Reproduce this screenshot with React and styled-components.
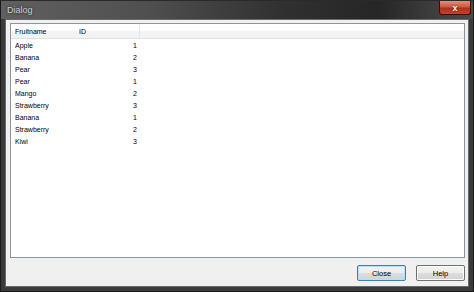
import React from 'react';
import styled, { createGlobalStyle } from 'styled-components';

const GlobalStyle = createGlobalStyle`
  html, body {
    margin: 0;
    padding: 0;
    background: #1e1e1e;
  }
  * {
    box-sizing: border-box;
  }
`;

const Window = styled.div`
  width: 474px;
  height: 292px;
  display: flex;
  flex-direction: column;
  background: #3a3a3a;
  border: 1px solid #1a1a1a;
  border-top-color: #2a2a2a;
  font-family: "Liberation Sans", Arial, sans-serif;
  overflow: hidden;
`;

const TitleBar = styled.div`
  height: 18px;
  display: flex;
  align-items: flex-start;
  justify-content: space-between;
  padding-left: 6px;
  background: linear-gradient(90deg, #606060 0%, #505050 30%, #303030 60%, #262626 80%, #3e3e3e 92%, #4a4a4a 100%);
`;

const Title = styled.span`
  font-size: 9px;
  line-height: 18px;
  color: #cfcfcf;
  text-shadow: 0 0 3px #1a1a1a;
`;

const CloseX = styled.div`
  width: 32px;
  height: 14px;
  margin-right: 2px;
  display: flex;
  align-items: center;
  justify-content: center;
  border: 1px solid #3a0d08;
  border-top: none;
  border-radius: 0 0 3px 3px;
  background: linear-gradient(180deg, #e0907f 0%, #c95a44 45%, #b12e17 55%, #c4452a 100%);
  color: #fff;
  font-size: 9px;
  font-weight: bold;
  text-shadow: 0 0 2px #5a1206;
`;

const Frame = styled.div`
  flex: 1;
  display: flex;
  padding: 0 4px 4px 4px;
`;

const Client = styled.div`
  flex: 1;
  display: flex;
  flex-direction: column;
  background: #f0f0f0;
  border: 1px solid #6a6a6a;
  padding: 3px 3px 0 4px;
`;

const List = styled.div`
  flex: 1;
  background: #fff;
  border: 1px solid #8e949c;
  display: flex;
  flex-direction: column;
`;

const Row = styled.div`
  display: grid;
  grid-template-columns: 62px 67px 1fr;
  height: ${p => (p.$header ? 15 : 12)}px;
  font-size: 7px;
  color: #000;
  align-items: center;
  ${p => p.$header && `
    background: linear-gradient(180deg, #ffffff 0%, #ffffff 45%, #f2f3f5 55%, #f2f3f5 100%);
    border-bottom: 1px solid #e0e2e5;
  `}
`;

const HeadCell = styled.div`
  height: 100%;
  display: flex;
  align-items: center;
  padding-left: ${p => p.$pad || 4}px;
  border-right: 1px solid ${p => p.$line || 'transparent'};
`;

const Cell = styled.div`
  padding: 0 ${p => (p.$num ? 3 : 0)}px 0 ${p => (p.$num ? 0 : 4)}px;
  text-align: ${p => (p.$num ? 'right' : 'left')};
`;

const Footer = styled.div`
  height: 28px;
  display: flex;
  align-items: center;
  justify-content: flex-end;
  gap: 10px;
  padding-top: 2px;
`;

const Button = styled.button`
  width: 49px;
  height: 16px;
  padding: 0;
  font-family: "Liberation Sans", Arial, sans-serif;
  font-size: 7.5px;
  color: #000;
  border-radius: 2px;
  border: 1px solid ${p => (p.$default ? '#3c7fb1' : '#707070')};
  box-shadow: ${p => (p.$default ? 'inset 0 0 0 1px #b3e1f7' : 'inset 0 0 0 1px #fbfbfb')};
  background: linear-gradient(180deg, #f4f4f4 0%, #ececec 48%, #dddddd 52%, #d2d2d2 100%);
`;

const fruits = [
  ['Apple', 1],
  ['Banana', 2],
  ['Pear', 3],
  ['Pear', 1],
  ['Mango', 2],
  ['Strawberry', 3],
  ['Banana', 1],
  ['Strawberry', 2],
  ['Kiwi', 3],
];

export default function App() {
  return (
    <>
      <GlobalStyle />
      <Window>
        <TitleBar>
          <Title>Dialog</Title>
          <CloseX>x</CloseX>
        </TitleBar>
        <Frame>
          <Client>
            <List>
              <Row $header>
                <HeadCell>Fruitname</HeadCell>
                <HeadCell $pad={6} $line="#e4e6e9">ID</HeadCell>
                <HeadCell />
              </Row>
              {fruits.map(([name, id], i) => (
                <Row key={i}>
                  <Cell>{name}</Cell>
                  <Cell $num>{id}</Cell>
                  <Cell />
                </Row>
              ))}
            </List>
            <Footer>
              <Button $default>Close</Button>
              <Button>Help</Button>
            </Footer>
          </Client>
        </Frame>
      </Window>
    </>
  );
}
